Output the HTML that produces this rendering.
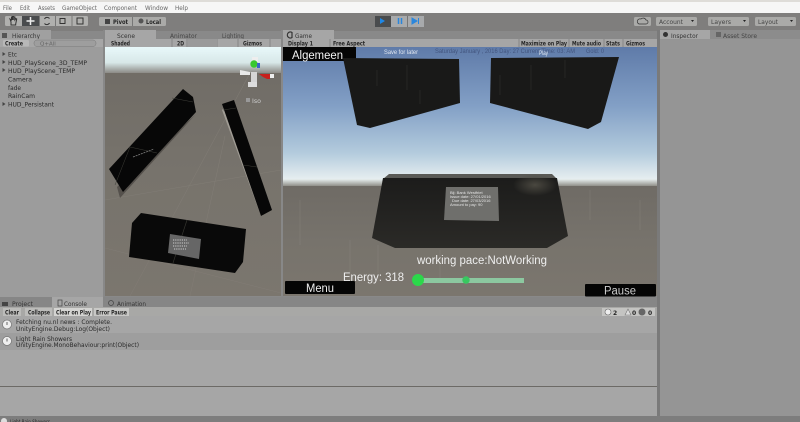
<!DOCTYPE html>
<html><head><meta charset="utf-8"><style>
html,body{margin:0;padding:0;background:#8a8a8a;overflow:hidden}
svg{display:block;filter:blur(.3px)}
text{font-family:"DejaVu Sans","Liberation Sans",sans-serif;font-size:6.5px;fill:#2c2c2c}
.l{font-family:"Liberation Sans",sans-serif}
.t{font-size:6.5px;fill:#2a2a2a}
.b{font-size:6px;fill:#262626;font-weight:bold}
</style></head><body>
<svg width="800" height="422" viewBox="0 0 800 422" xmlns="http://www.w3.org/2000/svg">
<defs>
<linearGradient id="sky" x1="0" y1="0" x2="0" y2="1"><stop offset="0" stop-color="#5f7ba9"/><stop offset=".45" stop-color="#83a0c6"/><stop offset=".8" stop-color="#b3cbdd"/><stop offset="1" stop-color="#e6eef0"/></linearGradient>
<linearGradient id="ssky" x1="0" y1="0" x2="0" y2="1"><stop offset="0" stop-color="#e8f8fa"/><stop offset=".6" stop-color="#d8e8e8"/><stop offset="1" stop-color="#8c8a86"/></linearGradient>
<linearGradient id="gnd" x1="0" y1="0" x2="0" y2="1"><stop offset="0" stop-color="#6f6b65"/><stop offset=".5" stop-color="#77736c"/><stop offset="1" stop-color="#7b766e"/></linearGradient>
<linearGradient id="hz" x1="0" y1="0" x2="0" y2="1"><stop offset="0" stop-color="#e8f0f0"/><stop offset="1" stop-color="#77736c"/></linearGradient>
<linearGradient id="box" x1="0" y1="0" x2="0" y2="1"><stop offset="0" stop-color="#1c1c1b"/><stop offset="1" stop-color="#2b2a27"/></linearGradient>
<radialGradient id="glow"><stop offset="0" stop-color="#4a4840"/><stop offset="1" stop-color="#4a4840" stop-opacity="0"/></radialGradient>
</defs>

<!-- base -->
<rect width="800" height="422" fill="#898989"/>
<!-- menu -->
<rect width="800" height="13" fill="#f6f6f6"/>
<rect width="800" height="2" fill="#dedcd8"/>
<g>
<text x="3" y="10" style="fill:#666" textLength="9" lengthAdjust="spacingAndGlyphs">File</text>
<text x="20" y="10" style="fill:#666" textLength="10" lengthAdjust="spacingAndGlyphs">Edit</text>
<text x="38" y="10" style="fill:#666" textLength="17" lengthAdjust="spacingAndGlyphs">Assets</text>
<text x="62" y="10" style="fill:#666" textLength="35" lengthAdjust="spacingAndGlyphs">GameObject</text>
<text x="104" y="10" style="fill:#666" textLength="33" lengthAdjust="spacingAndGlyphs">Component</text>
<text x="145" y="10" style="fill:#666" textLength="23" lengthAdjust="spacingAndGlyphs">Window</text>
<text x="175" y="10" style="fill:#666" textLength="13" lengthAdjust="spacingAndGlyphs">Help</text>
</g>

<!-- toolbar -->
<rect y="13" width="800" height="18" fill="#7f7e7d"/>
<rect x="5" y="16" width="83" height="10" rx="1.5" fill="#b0b0ae"/>
<rect x="22" y="16" width="17" height="10" fill="#4a4c4e"/>
<g stroke="#333" stroke-width="1" fill="none">
<path d="M11 25v-3l-1-3 1.500 1v-3h1v3-3.500h1.200v3.500-3h1.200v3l1-1.500.8.500-1 5v1z"/>
<path d="M44.500 19a3 3 0 0 1 5-.5M49.500 23a3 3 0 0 1-5 .5"/><rect x="60" y="18.500" width="5" height="5"/><rect x="77" y="18" width="6" height="6"/>
<path d="M39.500 16v10M55.500 16v10M72 16v10" stroke="#777"/>
</g>
<path d="M30.500 17v8M26.500 21h8" stroke="#eee" stroke-width="1.500"/>
<rect x="99" y="17" width="67" height="9" rx="1.500" fill="#aaaaa8"/>
<path d="M132.500 17v9" stroke="#777"/>
<text x="113" y="24" class="b" textLength="15" lengthAdjust="spacingAndGlyphs">Pivot</text><text x="146" y="24" class="b" textLength="15" lengthAdjust="spacingAndGlyphs">Local</text>
<rect x="105" y="19" width="5" height="5" fill="#444"/><circle cx="141" cy="21" r="2.500" fill="#555"/>
<!-- play -->
<rect x="375" y="16" width="16" height="11" fill="#4a4c4e"/>
<rect x="391" y="16" width="33" height="11" fill="#a8aaac"/>
<path d="M407.500 16v11" stroke="#777"/>
<path d="M380 18l5 3-5 3z" fill="#1e88e8"/>
<path d="M398.500 18v6M401.500 18v6" stroke="#2a86dc" stroke-width="1.500"/>
<path d="M412 18l5 3-5 3zM418.500 18v6" fill="#2a86dc" stroke="#2a86dc"/>
<!-- right toolbar -->
<rect x="634" y="17" width="17" height="9" rx="1.500" fill="#aaaaa8"/>
<path d="M639 24h7a2 2 0 0 0 0-4 3 3 0 0 0-5-1 2.500 2.500 0 0 0-2 5z" fill="none" stroke="#333" stroke-width=".7"/>
<rect x="656" y="17" width="41" height="9" rx="1.500" fill="#aaaaa8"/>
<rect x="708" y="17" width="41" height="9" rx="1.500" fill="#aaaaa8"/>
<rect x="755" y="17" width="41" height="9" rx="1.500" fill="#aaaaa8"/>
<text x="659" y="24" style="fill:#444" textLength="24" lengthAdjust="spacingAndGlyphs">Account</text><text x="711" y="24" style="fill:#444" textLength="20" lengthAdjust="spacingAndGlyphs">Layers</text><text x="758" y="24" style="fill:#444" textLength="20" lengthAdjust="spacingAndGlyphs">Layout</text>
<path d="M691 20h3l-1.500 2zM743 20h3l-1.500 2zM790 20h3l-1.500 2z" fill="#222"/>

<!-- hierarchy -->
<rect x="0" y="30" width="51" height="10" fill="#a0a0a0"/>
<text x="12" y="38" style="fill:#333" textLength="28" lengthAdjust="spacingAndGlyphs">Hierarchy</text>
<rect x="2" y="33" width="5" height="5" fill="#555"/>
<rect x="0" y="39" width="103" height="8" fill="#a6a6a6"/>
<rect x="3" y="40" width="26" height="6.500" rx="1" fill="#b8b8b8"/><text x="5" y="45.500" class="b" textLength="18" lengthAdjust="spacingAndGlyphs">Create</text>
<rect x="34" y="40" width="62" height="6.500" rx="3" fill="#9e9e9e" stroke="#777" stroke-width=".5"/><text x="40" y="45.500" style="font-size:5.500px;fill:#666">Q+All</text>
<rect x="0" y="47" width="103" height="250" fill="#9c9c9c"/>
<g>
<text x="8" y="56.500" class="t" textLength="9" lengthAdjust="spacingAndGlyphs">Etc</text>
<text x="8" y="65" class="t" textLength="79" lengthAdjust="spacingAndGlyphs">HUD_PlayScene_3D_TEMP</text>
<text x="8" y="73" class="t" textLength="67" lengthAdjust="spacingAndGlyphs">HUD_PlayScene_TEMP</text>
<text x="8" y="81.500" class="t" textLength="24" lengthAdjust="spacingAndGlyphs">Camera</text>
<text x="8" y="90" class="t" textLength="13" lengthAdjust="spacingAndGlyphs">fade</text>
<text x="8" y="98" class="t" textLength="27" lengthAdjust="spacingAndGlyphs">RainCam</text>
<text x="8" y="106.500" class="t" textLength="46" lengthAdjust="spacingAndGlyphs">HUD_Persistant</text>
<path d="M2.500 52l3 2-3 2zM2.500 60l3 2-3 2zM2.500 68l3 2-3 2zM2.500 102l3 2-3 2z" fill="#444"/>
</g>

<!-- scene -->
<rect x="103" y="30" width="3" height="268" fill="#888"/>
<rect x="105" y="30" width="51" height="10" fill="#a6a6a6"/>
<text x="117" y="38" style="fill:#333" textLength="18" lengthAdjust="spacingAndGlyphs">Scene</text><text x="170" y="38" style="fill:#444" textLength="27" lengthAdjust="spacingAndGlyphs">Animator</text><text x="222" y="38" style="fill:#444" textLength="22" lengthAdjust="spacingAndGlyphs">Lighting</text>
<rect x="105" y="39" width="176" height="8" fill="#a6a6a6"/>
<text x="111" y="45.500" class="b" textLength="19" lengthAdjust="spacingAndGlyphs">Shaded</text><text x="177" y="45.500" class="b" textLength="7" lengthAdjust="spacingAndGlyphs">2D</text><text x="243" y="45.500" class="b" textLength="19" lengthAdjust="spacingAndGlyphs">Gizmos</text>
<path d="M172 39v8M187 39v8M217 39v8M238 39v8M270 39v8" stroke="#868686"/>
<rect x="188" y="39" width="29" height="8" fill="#9a9a9a"/>
<rect x="105" y="47" width="176" height="249" fill="url(#gnd)"/>
<rect x="105" y="47" width="176" height="26" fill="url(#ssky)"/>
<g stroke="#827d76" stroke-width=".5" fill="none">
<path d="M105 200L281 170M130 296L250 73M105 248l176 45M190 296l35-160"/>
</g>
<!-- gizmo -->
<path d="M240 70l10 2 0 3-10 0z" fill="#e8e8e8"/>
<rect x="251" y="72" width="6" height="13" fill="#d5d5d5"/><rect x="248" y="82" width="9" height="5" fill="#ddd"/>
<rect x="252" y="57" width="6" height="5" fill="#eee"/>
<circle cx="254" cy="64" r="3.700" fill="#38c830"/><rect x="257" y="63" width="3" height="5" fill="#3a66c8"/>
<path d="M259 74h11v5l-3 0-4-2z" fill="#c8201c"/><rect x="270" y="74" width="4" height="4" fill="#eee"/>
<rect x="246" y="98" width="4" height="4" fill="#999"/><text x="252" y="103" style="fill:#ccc" textLength="9" lengthAdjust="spacingAndGlyphs">Iso</text>
<!-- scene boxes -->
<path d="M117 187l3 11 75-83z" fill="#55514c"/>
<path d="M183 89l10 8 3 15-73 80-14-23z" fill="#070707"/>
<path d="M130 147l27 6M172 98l21 4M130 147l-15 38" stroke="#3e3e38" stroke-width=".5" fill="none"/>
<path d="M133 157l21-8" stroke="#8a8a8a" stroke-width=".7" stroke-dasharray="2 .8"/>
<path d="M222 110l39 106 2-1-39-107z" fill="#a09c94"/>
<path d="M222 104l12-4 38 110-11 6z" fill="#070707"/>
<path d="M223 110l13-2M243 165l14 2" stroke="#3e3e38" stroke-width=".5"/>
<path d="M141 213l105 16-3 33-8 11-106-16 3-34z" fill="#090909"/>
<path d="M187 220l-14 43" stroke="#3a3a34" stroke-width=".6"/>
<path d="M170 234l31 5-2 20-31-6z" fill="#666"/>
<g stroke="#cfcfcf" stroke-width="1" stroke-dasharray="1.200 1" fill="none"><path d="M173 240h14M173 243h16M173 246h14M174 249h12"/></g>

<!-- game -->
<rect x="281" y="30" width="3" height="268" fill="#888"/>
<rect x="283" y="30" width="51" height="10" fill="#a6a6a6"/>
<text x="295" y="38" style="fill:#333" textLength="17" lengthAdjust="spacingAndGlyphs">Game</text>
<path d="M292 32.500a3 3 0 1 0 0 5z" fill="none" stroke="#333" stroke-width="1.200"/>
<rect x="283" y="39" width="374" height="8" fill="#a6a6a6"/>
<text x="288" y="45.500" class="b" textLength="25" lengthAdjust="spacingAndGlyphs">Display 1</text><text x="333" y="45.500" class="b" textLength="32" lengthAdjust="spacingAndGlyphs">Free Aspect</text>
<text x="521" y="45.500" class="b" textLength="46" lengthAdjust="spacingAndGlyphs">Maximize on Play</text><text x="572" y="45.500" class="b" textLength="29" lengthAdjust="spacingAndGlyphs">Mute audio</text><text x="606" y="45.500" class="b" textLength="14" lengthAdjust="spacingAndGlyphs">Stats</text><text x="626" y="45.500" class="b" textLength="19" lengthAdjust="spacingAndGlyphs">Gizmos</text>
<path d="M330 39v8M519 39v8M569 39v8M604 39v8M623 39v8" stroke="#868686"/>
<rect x="283" y="47" width="374" height="132" fill="url(#sky)"/>
<rect x="283" y="179" width="374" height="9" fill="url(#hz)"/>
<rect x="283" y="186" width="374" height="110" fill="url(#gnd)"/>
<rect x="283" y="47" width="73" height="14" fill="#050505"/>
<text x="292" y="59" class="l" style="font-size:11.500px;fill:#f4f4f4" textLength="51" lengthAdjust="spacingAndGlyphs">Algemeen</text>
<text x="384" y="54" class="l" style="font-size:6px;fill:#dfe6f0" textLength="34" lengthAdjust="spacingAndGlyphs">Save for later</text>
<text x="435" y="53" class="l" style="font-size:6.200px;fill:#43567f" textLength="140" lengthAdjust="spacingAndGlyphs">Saturday January , 2016 Day: 27 Current Time: 03: AM</text>
<text x="586" y="53" class="l" style="font-size:6.200px;fill:#43567f" textLength="18" lengthAdjust="spacingAndGlyphs">Gold: 0</text>
<path d="M343 58l116 1 1 44-90 25-13-3z" fill="#191918"/>
<path d="M491 58l128-1-18 65-13 7-98-26z" fill="#191918"/>
<text x="539" y="55" class="l" style="font-size:6px;fill:#dfe6f0" textLength="9" lengthAdjust="spacingAndGlyphs">Play</text>
<g stroke="#2c2c2a" stroke-width=".7"><path d="M377 70v16M407 65v25M420 90v14M531 65v25M500 75v20M565 60v18"/></g>
<path d="M389 174h163l5 5h-174z" fill="#5a5a56"/>
<path d="M383 178h174l11 58-21 12H395l-23-10z" fill="url(#box)"/>
<ellipse cx="535" cy="185" rx="22" ry="11" fill="url(#glow)"/>
<path d="M446 187l52 0 1 34-55-1z" fill="#6f6f6c"/>
<g>
<text x="450" y="194" class="l" style="font-size:4px;fill:#e4e4e4">Bij: Bank Westfriet</text>
<text x="450" y="198" class="l" style="font-size:4px;fill:#e4e4e4">Issue date: 27/01/2016</text>
<text x="452" y="202" class="l" style="font-size:4px;fill:#e4e4e4">Due date: 27/03/2016</text>
<text x="450" y="206" class="l" style="font-size:4px;fill:#e4e4e4">Amount to pay: 90</text>
</g>
<g stroke="#aaa69c" stroke-width="1" opacity=".15"><path d="M300 200v45M350 240v40M378 245v28M440 250v30M590 190v30M640 200v30"/></g>
<text x="417" y="264" class="l" style="font-size:11.500px;fill:#eee" textLength="130" lengthAdjust="spacingAndGlyphs">working pace:NotWorking</text>
<text x="343" y="281" class="l" style="font-size:11.500px;fill:#eee" textLength="61" lengthAdjust="spacingAndGlyphs">Energy: 318</text>
<rect x="418" y="278" width="106" height="5" fill="#8cc8a0"/>
<circle cx="418" cy="280" r="6" fill="#2bd84a"/><circle cx="466" cy="280" r="3.700" fill="#38c860"/>
<rect x="285" y="281" width="70" height="13" rx="1" fill="#050505"/>
<text x="306" y="292" class="l" style="font-size:11.500px;fill:#eee" textLength="28" lengthAdjust="spacingAndGlyphs">Menu</text>
<rect x="585" y="284" width="71" height="12.500" rx="1" fill="#050505"/>
<text x="604" y="294.500" class="l" style="font-size:11.500px;fill:#ccc" textLength="32" lengthAdjust="spacingAndGlyphs">Pause</text>

<!-- inspector -->
<rect x="657" y="30" width="143" height="392" fill="#8c8c8c"/>
<rect x="657" y="30" width="3" height="387" fill="#7a7a7a"/>
<rect x="660" y="30" width="50" height="9" fill="#a6a6a6"/>
<circle cx="665.500" cy="34.500" r="2.500" fill="#333"/>
<text x="671" y="38" style="fill:#333" textLength="27" lengthAdjust="spacingAndGlyphs">Inspector</text><text x="723" y="38" style="fill:#444" textLength="34" lengthAdjust="spacingAndGlyphs">Asset Store</text>
<rect x="716" y="32" width="5" height="5" fill="#666"/>
<rect x="660" y="39" width="140" height="378" fill="#959595"/>

<!-- console -->
<rect x="0" y="297" width="657" height="10" fill="#868686"/>
<rect x="52" y="297" width="51" height="10" fill="#a6a6a6"/>
<text x="12" y="306" style="fill:#333" textLength="21" lengthAdjust="spacingAndGlyphs">Project</text><text x="64" y="306" style="fill:#333" textLength="23" lengthAdjust="spacingAndGlyphs">Console</text><text x="117" y="306" style="fill:#333" textLength="29" lengthAdjust="spacingAndGlyphs">Animation</text>
<rect x="2" y="302" width="6" height="4" fill="#444"/><rect x="58" y="300" width="4" height="6" fill="none" stroke="#444" stroke-width=".7"/><circle cx="111" cy="303" r="2.500" fill="none" stroke="#444" stroke-width=".7"/>
<rect x="0" y="307" width="657" height="9" fill="#a8a8a6"/>
<rect x="3" y="308" width="18" height="8" fill="#bcbcba"/><rect x="25" y="308" width="27" height="8" fill="#bcbcba"/><rect x="54" y="308" width="38" height="8" fill="#d4d4d2"/><rect x="94" y="308" width="35" height="8" fill="#c8c8c6"/>
<text x="5" y="314.500" class="b" textLength="14" lengthAdjust="spacingAndGlyphs">Clear</text><text x="28" y="314.500" class="b" textLength="22" lengthAdjust="spacingAndGlyphs">Collapse</text><text x="56" y="314.500" class="b" textLength="35" lengthAdjust="spacingAndGlyphs">Clear on Play</text><text x="96" y="314.500" class="b" textLength="31" lengthAdjust="spacingAndGlyphs">Error Pause</text>
<rect x="602" y="308" width="53" height="8" fill="#c4c4c2"/>
<circle cx="608" cy="312" r="3" fill="#eee" stroke="#666" stroke-width=".6"/><text x="613" y="315" class="b">2</text><path d="M625 315l3-6 3 6z" fill="#ddd" stroke="#777" stroke-width=".6"/><text x="632" y="315" class="b">0</text><circle cx="642" cy="312" r="3.500" fill="#666"/><text x="648" y="315" class="b">0</text>
<rect x="0" y="316" width="657" height="17" fill="#a6a6a6"/>
<rect x="0" y="333" width="657" height="17" fill="#9e9e9e"/>
<rect x="0" y="350" width="657" height="36" fill="#a6a6a6"/>
<rect x="0" y="386" width="657" height="1" fill="#6c6a66"/>
<rect x="0" y="387" width="657" height="29" fill="#a6a6a6"/>
<circle cx="7" cy="324.500" r="4.500" fill="#eee" stroke="#777" stroke-width=".7"/><circle cx="7" cy="341" r="4.500" fill="#eee" stroke="#777" stroke-width=".7"/>
<path d="M7 322v3M7 338.500v3" stroke="#666"/>
<text x="16" y="324" class="t" textLength="96" lengthAdjust="spacingAndGlyphs">Fetching nu.nl news : Complete.</text>
<text x="16" y="331" class="t" textLength="94" lengthAdjust="spacingAndGlyphs">UnityEngine.Debug:Log(Object)</text>
<text x="16" y="341" class="t" textLength="56" lengthAdjust="spacingAndGlyphs">Light Rain Showers</text>
<text x="16" y="347" class="t" textLength="123" lengthAdjust="spacingAndGlyphs">UnityEngine.MonoBehaviour:print(Object)</text>
<!-- status -->
<rect x="0" y="416" width="800" height="6" fill="#7d7d7d"/>
<circle cx="4" cy="421" r="3" fill="#ddd"/>
<text x="10" y="424" class="t" textLength="40" lengthAdjust="spacingAndGlyphs">Light Rain Showers</text>
</svg>
</body></html>
